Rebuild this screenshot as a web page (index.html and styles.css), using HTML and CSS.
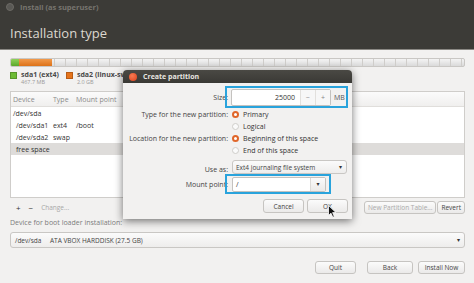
FILE: index.html
```html
<!DOCTYPE html>
<html>
<head>
	<meta charset="utf-8">
	<title>Install (as superuser)</title>
	<link rel="stylesheet" href="styles.css">
</head>
<body>
<div class="window">
	<header class="top">
		<div class="titlebar"><span class="close-dot"></span>Install (as superuser)</div>
		<h1>Installation type</h1>
	</header>

	<main class="content">
		<div class="diskbar"><span class="seg ext4"></span><span class="seg swap"></span></div>

		<div class="legend">
			<div class="legend-item">
				<span class="swatch green"></span>
				<div><div class="legend-name">sda1 (ext4)</div><div class="legend-size">467.7 MB</div></div>
			</div>
			<div class="legend-item">
				<span class="swatch orange"></span>
				<div><div class="legend-name">sda2 (linux-swap)</div><div class="legend-size">2.0 GB</div></div>
			</div>
		</div>

		<div class="table">
			<div class="row head"><span class="c-dev">Device</span><span class="c-type">Type</span><span class="c-mount">Mount point</span></div>
			<div class="row"><span class="c-dev">/dev/sda</span></div>
			<div class="row"><span class="c-dev sub">/dev/sda1</span><span class="c-type">ext4</span><span class="c-mount">/boot</span></div>
			<div class="row"><span class="c-dev sub">/dev/sda2</span><span class="c-type">swap</span></div>
			<div class="row selected"><span class="c-dev sub">free space</span></div>
		</div>

		<div class="toolbar">
			<div class="tools"><span class="tool">+</span><span class="tool">&minus;</span><span class="tool off">Change...</span></div>
			<div class="tools-right"><button class="btn off">New Partition Table...</button><button class="btn">Revert</button></div>
		</div>

		<div class="label">Device for boot loader installation:</div>
		<div class="combo wide"><span class="dev">/dev/sda</span><span>ATA VBOX HARDDISK (27.5 GB)</span><span class="arrow">&#9662;</span></div>

		<div class="actions">
			<button class="btn quit">Quit</button>
			<button class="btn back">Back</button>
			<button class="btn install">Install Now</button>
		</div>
	</main>

	<div class="dialog">
		<div class="dialog-title"><span class="red-dot"></span>Create partition</div>
		<div class="form">
			<div class="lbl">Size:</div>
			<div class="ctl">
				<div class="hl size-hl">
					<div class="spin"><span class="spin-val">25000</span><span class="spin-btn">&minus;</span><span class="spin-btn">+</span></div>
					<span class="unit">MB</span>
				</div>
			</div>

			<div class="lbl">Type for the new partition:</div>
			<div class="ctl radio"><span class="dot on"></span>Primary</div>
			<div class="lbl"></div>
			<div class="ctl radio"><span class="dot"></span>Logical</div>

			<div class="lbl">Location for the new partition:</div>
			<div class="ctl radio"><span class="dot on"></span>Beginning of this space</div>
			<div class="lbl"></div>
			<div class="ctl radio"><span class="dot"></span>End of this space</div>

			<div class="lbl use">Use as:</div>
			<div class="ctl use"><div class="combo fs">Ext4 journaling file system<span class="arrow">&#9662;</span></div></div>

			<div class="lbl mnt">Mount point:</div>
			<div class="ctl mnt">
				<div class="hl mnt-hl">
					<div class="entry-combo"><span class="entry-val">/</span><span class="entry-btn">&#9662;</span></div>
				</div>
			</div>
		</div>
		<div class="dialog-actions">
			<button class="btn">Cancel</button>
			<button class="btn ok">OK</button>
		</div>
		<svg class="cursor" width="9" height="13" viewBox="0 0 9 13">
			<path d="M0.5 0.5 L0.5 10.5 L3 8.2 L4.8 12.3 L6.3 11.6 L4.6 7.6 L8 7.6 Z" fill="#111" stroke="#fff" stroke-width="0.8"/>
		</svg>
	</div>
</div>
</body>
</html>
```

FILE: styles.css
```css
html{font-family: "Open Sans", "DejaVu Sans", sans-serif;}
body{
	margin: 0;
	background: #f2f1f0;
	overflow: hidden;
}

.window {
	position: relative;
	width: 474px;
	height: 283px;
}

/* dark top area */
.top {
	height: 50px;
	box-sizing: border-box;
	background: #3c3b37;
	border-bottom: 1px solid #8a8883;
	padding: 0 10px;
}

.titlebar {
	display: flex;
	align-items: center;
	height: 13px;
	margin-left: -4px;
	font-size: 7.5px;
	font-weight: bold;
	color: #77756f;
}

.close-dot {
	width: 6px;
	height: 6px;
	border-radius: 50%;
	background: #5a5955;
	border: 1px solid #6c6a65;
	margin-right: 6px;
}

h1 {
	margin: 12px 0 0;
	font-size: 13px;
	font-weight: normal;
	color: #dcd8cf;
	line-height: 16px;
}

.content {
	padding: 0 9px 0 10px;
	font-size: 7px;
	color: #333;
}

/* partition usage bar */
.diskbar {
	display: flex;
	height: 7px;
	margin-top: 8px;
	border: 1px solid #c9c7c4;
	border-radius: 2px;
	background:
		repeating-linear-gradient(90deg, transparent 0 10px, #cfcdca 10px 11px),
		linear-gradient(#f4f4f4, #dadada);
	overflow: hidden;
}

.seg { height: 100%; }
.seg.ext4 { width: 8px; background: linear-gradient(#8fd15a, #5ca82a); }
.seg.swap { width: 33px; background: linear-gradient(#f19a4c, #dd7218); }

.legend {
	display: flex;
	gap: 7px;
	margin-top: 3px;
	height: 18px;
}

.legend-item {
	display: flex;
	gap: 4px;
}

.swatch {
	width: 5px;
	height: 5px;
	margin-top: 2px;
	border: 1px solid rgba(0,0,0,.2);
}
.swatch.green { background: #6dbb35; }
.swatch.orange { background: #e6741b; }

.legend-name {
	font-size: 7px;
	font-weight: bold;
	color: #4a4a4a;
	line-height: 9px;
}

.legend-size {
	font-size: 5.5px;
	color: #9a9a9a;
	line-height: 7px;
}

/* partition list */
.table {
	margin-top: 3px;
	height: 107px;
	box-sizing: border-box;
	background: #fff;
	border: 1px solid #cfcdca;
}

.row {
	display: flex;
	align-items: center;
	height: 12px;
	padding-left: 2px;
}

.row.head {
	height: 14px;
	color: #8a8a8a;
	border-bottom: 1px solid #e0dedb;
	background: linear-gradient(#fbfbfb, #f0efee);
}

.row.selected { background: #dedcda; }

.c-dev { width: 40px; }
.c-dev.sub { padding-left: 3px; width: 37px; }
.c-type { width: 23px; }

.toolbar {
	display: flex;
	justify-content: space-between;
	align-items: center;
	height: 15px;
	margin-top: 2px;
}

.tools {
	display: flex;
	align-items: center;
	gap: 8px;
	padding-left: 6px;
	font-size: 8px;
}

.tool.off { font-size: 6.5px; color: #a8a8a8; }

.tools-right {
	display: flex;
	gap: 1px;
}

.btn {
	height: 13px;
	padding: 0 3px;
	font-family: "Open Sans", "DejaVu Sans", sans-serif;
	font-size: 6.5px;
	color: #444;
	background: linear-gradient(#fbfbfb, #ebeae9);
	border: 1px solid #c6c4c1;
	border-radius: 3px;
	line-height: 11px;
}
.btn.off { color: #aaa; }

.label {
	margin-top: 3px;
	height: 9px;
	line-height: 9px;
	color: #7c7c7c;
}

.combo {
	display: flex;
	align-items: center;
	box-sizing: border-box;
	border: 1px solid #c9c7c4;
	border-radius: 3px;
	background: linear-gradient(#fbfbfb, #eeedec);
	color: #444;
}

.combo.wide {
	margin-top: 5px;
	height: 16px;
	padding: 0 4px;
	font-size: 6.5px;
}

.combo .dev { width: 35px; }

.arrow {
	margin-left: auto;
	font-size: 6px;
	color: #333;
}

.actions {
	display: flex;
	justify-content: flex-end;
	align-items: center;
	gap: 5px;
	margin-top: 13px;
}
.actions .btn { height: 13px; }
.btn.quit { width: 41px; margin-right: 6px; }
.btn.back { width: 46px; }
.btn.install { width: 47px; }

/* Create partition dialog, floating over the window */
.dialog {
	position: absolute;
	left: 123px;
	top: 70px;
	width: 229px;
	height: 149px;
	background: #f2f1f0;
	border-radius: 4px 4px 0 0;
	box-shadow: 0 2px 9px rgba(0,0,0,.55);
	font-size: 7px;
	color: #333;
}

.dialog-title {
	display: flex;
	align-items: center;
	height: 13px;
	padding-left: 6px;
	border-radius: 4px 4px 0 0;
	background: linear-gradient(#4a4944, #3a3935);
	color: #e8e6e1;
	font-weight: bold;
	font-size: 7px;
}

.red-dot {
	width: 8px;
	height: 8px;
	border-radius: 50%;
	background: radial-gradient(circle at 40% 35%, #f77a52, #d9411c);
	margin-right: 6px;
}

.form {
	display: grid;
	grid-template-columns: 105px 1fr;
	grid-template-rows: 22px 12px 12px 12px 12px 18px 20px;
	column-gap: 4px;
	padding-top: 3px;
}

.lbl {
	display: flex;
	align-items: center;
	justify-content: flex-end;
	white-space: nowrap;
	color: #444;
}

.ctl {
	display: flex;
	align-items: center;
}

.hl {
	display: flex;
	align-items: center;
	box-sizing: border-box;
	border: 2px solid #29a3dc;
	margin-left: -7px;
}

.size-hl {
	width: 123px;
	height: 22px;
	padding-left: 4px;
}

.spin {
	display: flex;
	height: 17px;
	width: 100px;
	box-sizing: border-box;
	background: #fff;
	border: 1px solid #c4c2bf;
	border-radius: 2px;
}

.spin-val {
	flex: 1;
	text-align: right;
	padding-right: 5px;
	line-height: 15px;
}

.spin-btn {
	width: 14px;
	border-left: 1px solid #e2e0dd;
	text-align: center;
	line-height: 15px;
	color: #888;
	background: #f7f7f7;
}

.unit { margin-left: 3px; color: #555; }

.radio { gap: 4px; }

.dot {
	width: 5px;
	height: 5px;
	border-radius: 50%;
	border: 1px solid #cfcdca;
	background: #fafafa;
}
.dot.on {
	border: 2px solid #e0662a;
	width: 3px;
	height: 3px;
	background: #fff;
}

.ctl.use, .lbl.use { align-items: flex-end; }

.combo.fs {
	width: 115px;
	height: 14px;
	padding: 0 4px 0 3px;
	font-size: 6.5px;
}

.mnt-hl {
	width: 106px;
	height: 20px;
	padding-left: 5px;
}

.entry-combo {
	display: flex;
	height: 15px;
	width: 94px;
	box-sizing: border-box;
	border: 1px solid #c4c2bf;
	border-radius: 2px;
	background: #fff;
}

.entry-val {
	flex: 1;
	padding-left: 3px;
	line-height: 13px;
}

.entry-btn {
	width: 14px;
	border-left: 1px solid #dcdad7;
	background: linear-gradient(#fbfbfb, #eceae8);
	text-align: center;
	font-size: 6px;
	line-height: 13px;
}

.dialog-actions {
	display: flex;
	justify-content: flex-end;
	gap: 3px;
	margin-top: 5px;
	padding-right: 4px;
}

.dialog-actions .btn {
	width: 41px;
	height: 14px;
}

.cursor {
	position: absolute;
	left: 205px;
	top: 135px;
}
```
